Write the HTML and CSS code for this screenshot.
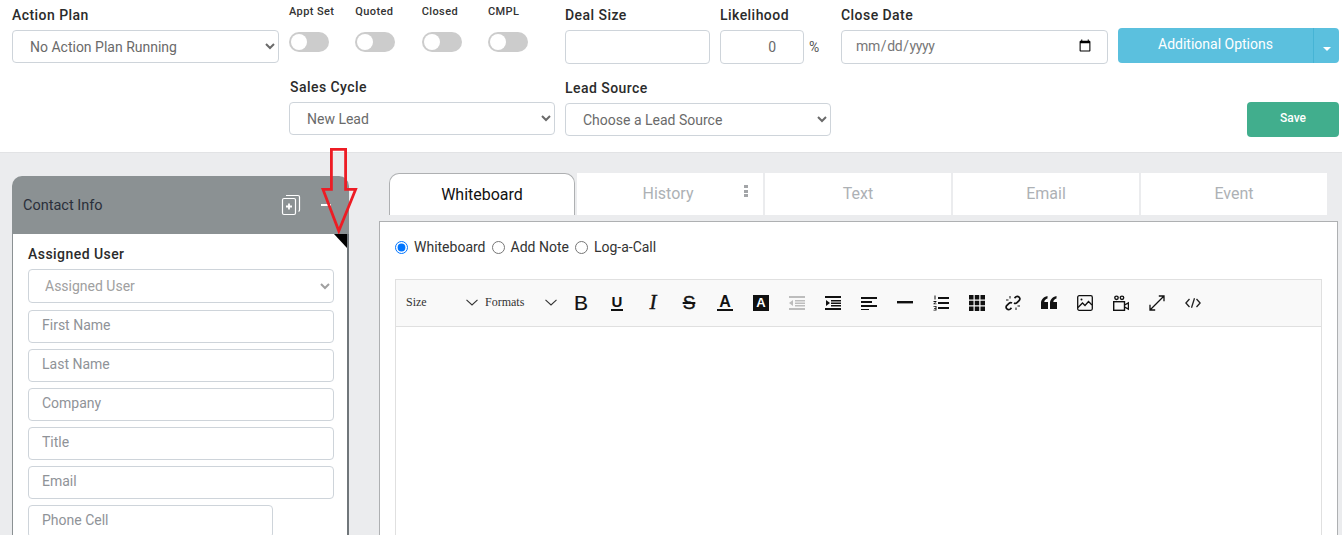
FILE: index.html
```html
<!DOCTYPE html>
<html lang="en">
<head>
<meta charset="utf-8">
<title>Contact</title>
<link rel="stylesheet" href="styles.css">
</head>
<body>
<header class="top-bar">
  <div class="field">
    <label class="field-label">Action Plan</label>
    <select class="control select-plan"><option>No Action Plan Running</option></select>
  </div>
  <div class="toggles">
    <div class="toggle-item"><span class="toggle-label">Appt Set</span><span class="toggle"></span></div>
    <div class="toggle-item"><span class="toggle-label">Quoted</span><span class="toggle"></span></div>
    <div class="toggle-item"><span class="toggle-label">Closed</span><span class="toggle"></span></div>
    <div class="toggle-item"><span class="toggle-label">CMPL</span><span class="toggle"></span></div>
  </div>
  <div class="deal-group">
    <div class="field deal-size">
      <label class="field-label">Deal Size</label>
      <input class="control input-tall" type="text">
    </div>
    <div class="field likelihood">
      <label class="field-label">Likelihood</label>
      <div class="likelihood-row">
        <input class="control input-tall input-right" type="text" value="0">
        <span class="percent">%</span>
      </div>
    </div>
  </div>
  <div class="field">
    <label class="field-label">Close Date</label>
    <input class="control input-tall input-date" type="date">
  </div>
  <div class="split-button">
    <button class="btn-options" type="button">Additional Options</button>
    <button class="btn-caret" type="button"><span class="caret"></span></button>
  </div>
  <div class="spacer"></div>
  <div class="field sales-cycle">
    <label class="field-label">Sales Cycle</label>
    <select class="control"><option>New Lead</option></select>
  </div>
  <div class="field lead-source">
    <label class="field-label">Lead Source</label>
    <select class="control"><option>Choose a Lead Source</option></select>
  </div>
  <div class="spacer"></div>
  <div class="save-cell"><button class="btn-save" type="button">Save</button></div>
</header>

<main class="workspace">
  <section class="contact-panel">
    <div class="panel-head">
      <span class="panel-title">Contact Info</span>
      <svg class="panel-copy" width="20" height="22" viewBox="0 0 20 22" fill="none" stroke="#fff" stroke-width="1.2" aria-hidden="true">
        <rect x="1.5" y="4.5" width="13" height="16" rx="1.5"/>
        <path d="M5 1.5h12a1.5 1.5 0 0 1 1.5 1.5v13a1.500 1.500 0 0 1-1 1.400"/>
        <path d="M8 9.500v6M5 12.500h6" stroke-width="1.800"/>
      </svg>
      <span class="panel-minus"></span>
    </div>
    <div class="panel-body">
      <span class="corner"></span>
      <label class="assigned-label">Assigned User</label>
      <select class="control muted"><option>Assigned User</option></select>
      <input class="control" type="text" placeholder="First Name">
      <input class="control" type="text" placeholder="Last Name">
      <input class="control" type="text" placeholder="Company">
      <input class="control" type="text" placeholder="Title">
      <input class="control" type="text" placeholder="Email">
      <input class="control phone" type="text" placeholder="Phone Cell">
    </div>
  </section>

  <section class="detail">
    <nav class="tabs">
      <a class="tab tab-active">Whiteboard</a>
      <a class="tab tab-history">History<span class="kebab"><i></i><i></i><i></i></span></a>
      <a class="tab">Text</a>
      <a class="tab">Email</a>
      <a class="tab">Event</a>
    </nav>
    <div class="detail-box">
      <div class="radios">
        <label class="radio"><input type="radio" name="mode" checked>Whiteboard</label>
        <label class="radio"><input type="radio" name="mode">Add Note</label>
        <label class="radio"><input type="radio" name="mode">Log-a-Call</label>
      </div>
      <div class="editor">
        <div class="toolbar">
          <div class="tb-select tb-size">Size<svg width="12" height="7" viewBox="0 0 12 7" fill="none" stroke="#333" stroke-width="1.100"><path d="M.5.800 6 6l5.500-5.200"/></svg></div>
          <div class="tb-select tb-formats">Formats<svg width="12" height="7" viewBox="0 0 12 7" fill="none" stroke="#333" stroke-width="1.100"><path d="M.5.800 6 6l5.500-5.200"/></svg></div>
          <span class="tb-btn"><span class="g-b">B</span></span>
          <span class="tb-btn"><span class="g-u">U</span></span>
          <span class="tb-btn"><span class="g-i">I</span></span>
          <span class="tb-btn"><span class="g-s">S</span></span>
          <span class="tb-btn"><span class="g-a">A</span></span>
          <span class="tb-btn"><span class="g-ab">A</span></span>
          <span class="tb-btn"><svg width="16" height="14" viewBox="0 0 16 14" fill="#bdbdbd"><path d="M0 0h16v2H0zM6 4h10v1.500H6zM6 6.500h10V8H6zM6 9h10v1.500H6zM0 12h16v2H0zM4 4v6L0 7z"/></svg></span>
          <span class="tb-btn"><svg width="16" height="14" viewBox="0 0 16 14" fill="#111"><path d="M0 0h16v2H0zM6 4h10v1.500H6zM6 6.500h10V8H6zM6 9h10v1.500H6zM0 12h16v2H0zM1 4v6l4-3z"/></svg></span>
          <span class="tb-btn"><svg width="16" height="14" viewBox="0 0 16 14" fill="#111"><path d="M0 1h16v2H0zM0 5h11v2H0zM0 9h16v2H0zM0 13h8v1.500H0z"/></svg></span>
          <span class="tb-btn"><svg width="16" height="3" viewBox="0 0 16 3" fill="#111"><path d="M0 0h16v2.400H0z"/></svg></span>
          <span class="tb-btn"><svg width="16" height="16" viewBox="0 0 16 16" fill="#111"><path d="M5 2h11v2H5zM5 7h11v2H5zM5 12h11v2H5zM1.500.5h1v4h-1zM.5 6h3v.8L1.500 8.500h2v.800h-3v-.800L2.500 7h-2zM.5 11h3v4.500h-3v-.800h2v-1h-1.500v-.700h1.500v-1.200h-2z"/></svg></span>
          <span class="tb-btn"><svg width="16" height="16" viewBox="0 0 16 16" fill="#111"><path d="M0 0h4.500v4.500H0zM5.750 0h4.500v4.500h-4.500zM11.500 0H16v4.500h-4.500zM0 5.750h4.500v4.500H0zM5.750 5.750h4.500v4.500h-4.500zM11.500 5.750H16v4.500h-4.500zM0 11.500h4.500V16H0zM5.750 11.500h4.500V16h-4.500zM11.500 11.500H16V16h-4.500z"/></svg></span>
          <span class="tb-btn"><svg width="16" height="16" viewBox="0 0 16 16" fill="none" stroke="#111" stroke-width="1.700"><path d="M9.500 3.200 10.800 1.900a2.500 2.500 0 0 1 3.500 3.500L12 7.700a2.500 2.500 0 0 1-3 .4"/><path d="M6.500 12.800 5.200 14.100a2.500 2.500 0 0 1-3.500-3.500L4 8.300a2.500 2.500 0 0 1 3-.4"/><path d="M5 1v2.500M1 5h2.500M11 15v-2.500M15 11h-2.500" stroke-width="1"/></svg></span>
          <span class="tb-btn"><svg width="16" height="13" viewBox="0 0 16 13" fill="#111"><path d="M7 13H0V7.500C0 3.500 2.300 1 6.500 0v2.600C4.400 3.300 3.400 4.500 3.300 6H7zM16 13H9V7.500C9 3.500 11.300 1 15.500 0v2.600c-2.100.7-3.100 1.900-3.200 3.400H16z"/></svg></span>
          <span class="tb-btn"><svg width="16" height="16" viewBox="0 0 16 16" fill="none" stroke="#111" stroke-width="1.300"><rect x=".7" y=".7" width="14.600" height="14.600" rx="1.500"/><path d="M1 12.500 5.500 8 8 10.500 11.500 6.500 15 10"/><circle cx="4.500" cy="4.500" r="1" fill="#111" stroke="none"/></svg></span>
          <span class="tb-btn"><svg width="16" height="16" viewBox="0 0 16 16" fill="none" stroke="#111" stroke-width="1.400"><circle cx="3.500" cy="2.800" r="1.700"/><circle cx="9" cy="2.800" r="1.700"/><rect x=".7" y="6.700" width="10.800" height="8.600"/><path d="M11.500 10 15.500 7.800v6.400L11.500 12"/></svg></span>
          <span class="tb-btn"><svg width="16" height="16" viewBox="0 0 16 16" fill="none" stroke="#111" stroke-width="1.300"><path d="M1 15 15 1M9.800 1H15v5.200M1 9.800V15h5.200"/></svg></span>
          <span class="tb-btn"><svg width="16" height="10" viewBox="0 0 16 10" fill="none" stroke="#222" stroke-width="1.300"><path d="M4.500 1 .9 5l3.600 4M11.500 1l3.600 4-3.600 4M9.500.3 6.500 9.700"/></svg></span>
        </div>
        <div class="editor-area"></div>
      </div>
    </div>
  </section>
</main>

<svg class="red-arrow" width="37" height="86" viewBox="0 0 37 86" fill="none" stroke="#ed1c24" stroke-width="2.800" aria-hidden="true">
  <path d="M10.400 1.400h14.200v40h10L17.800 83 2 41.400h8.400z"/>
</svg>
</body>
</html>
```

FILE: styles.css
```css
* { box-sizing: border-box; }

html, body {
  margin: 0;
  height: 535px;
  overflow: hidden;
}

body {
  background: #ebecee;
  font-family: Roboto, "Liberation Sans", Arial, sans-serif;
  color: #222;
  position: relative;
}

.top-bar {
  height: 153px;
  background: #fff;
  border-bottom: 1px solid #e2e3e5;
  padding: 5px 3px 0 12px;
  display: grid;
  grid-template-columns: 267px 266px 266px 267px 221px;
  grid-template-rows: 59px 75px;
  column-gap: 10px;
  row-gap: 13px;
}

.field { display: flex; flex-direction: column; }

.field-label {
  font-size: 14px;
  font-weight: 500;
  line-height: 20px;
  height: 20px;
  margin-bottom: 5px;
  letter-spacing: .45px;
  color: #2b2b2b;
}

.control {
  display: block;
  width: 100%;
  height: 33px;
  border: 1px solid #ced4da;
  border-radius: 4px;
  background: #fff;
  font-family: inherit;
  font-size: 14px;
  color: #6a6a6a;
  padding: 0 13px;
  outline: none;
}

select.control { padding-left: 13px; }
.input-tall { height: 34px; }
.input-right { text-align: right; padding-right: 27px; }
.input-date { color: #777; letter-spacing: -.4px; padding-bottom: 2px; }
.control::placeholder { color: #8f9398; opacity: 1; }
.muted { color: #a0a0a0; }

.toggles {
  display: grid;
  grid-template-columns: repeat(4, 66.330px);
}

.toggle-item { display: flex; flex-direction: column; }

.toggle-label {
  font-size: 11px;
  font-weight: 500;
  line-height: 13px;
  white-space: nowrap;
  letter-spacing: .4px;
  color: #333;
}

.toggle {
  position: relative;
  display: block;
  width: 40px;
  height: 20px;
  margin-top: 14px;
  border-radius: 10px;
  background: #ccc;
}

.toggle::before {
  content: "";
  position: absolute;
  left: 2px;
  top: 2px;
  width: 16px;
  height: 16px;
  border-radius: 50%;
  background: #fff;
}

.deal-group { display: flex; gap: 10px; }
.deal-size { width: 145px; }
.likelihood { width: 111px; }
.likelihood-row { display: flex; align-items: center; }
.likelihood-row .control { width: 84px; flex: none; }
.percent { margin-left: 5px; font-size: 14px; color: #555; }

.split-button { display: flex; height: 35px; margin-top: 23px; }

.btn-options, .btn-caret {
  border: 0;
  background: #5bc0de;
  color: #fff;
  font-family: inherit;
  font-size: 14px;
  padding: 0;
}

.btn-options {
  width: 195px;
  border-radius: 4px 0 0 4px;
  padding-bottom: 4px;
}

.btn-caret {
  width: 26px;
  border-left: 1px solid #46b4d5;
  border-radius: 0 4px 4px 0;
}

.caret {
  display: inline-block;
  border: 4px solid transparent;
  border-top-color: #fff;
  border-bottom-width: 0;
}

.spacer { min-width: 0; }
.sales-cycle .field-label { padding-left: 1px; }
.lead-source { padding-top: 1px; }
.save-cell { display: flex; justify-content: flex-end; padding-top: 25px; }

.btn-save {
  width: 92px;
  height: 35px;
  border: 0;
  border-radius: 4px;
  background: #41ae8d;
  color: #fff;
  font-family: inherit;
  font-size: 12px;
  font-weight: 500;
  padding: 0 0 4px;
}

.workspace {
  display: flex;
  align-items: flex-start;
  padding: 20px 4px 0 12px;
  gap: 30px;
}

.contact-panel {
  flex: none;
  width: 337px;
  margin-top: 3px;
}

.panel-head {
  height: 58px;
  background: #8b9193;
  border-radius: 10px 10px 0 0;
  display: flex;
  align-items: center;
  padding: 0 0 0 11px;
  color: #2a2f3a;
  font-size: 14.500px;
}

.panel-title { flex: 1; }
.panel-copy { margin-right: 20px; }
.panel-minus { width: 10px; height: 2px; background: #fff; margin-right: 18px; }

.panel-body {
  position: relative;
  background: #fff;
  border-left: 1px solid #8b9193;
  border-right: 2px solid #70767a;
  padding: 10px 13px 40px 15px;
  display: flex;
  flex-direction: column;
  gap: 6px;
}

.corner {
  position: absolute;
  right: 0;
  top: 0;
  width: 0;
  height: 0;
  border-style: solid;
  border-width: 0 13px 14px 0;
  border-color: transparent #000 transparent transparent;
}

.assigned-label {
  font-size: 14px;
  font-weight: 500;
  line-height: 20px;
  letter-spacing: .45px;
  margin-bottom: -1px;
  color: #2b2b2b;
}

.panel-body .muted { margin-bottom: 1px; padding-left: 12px; height: 34px; }
.panel-body input { padding-bottom: 3px; }
.phone { width: 245px; }

.detail { flex: 1; min-width: 0; }

.tabs {
  display: flex;
  gap: 2px;
  padding-left: 10px;
  margin-bottom: 6px;
  height: 42px;
}

.tab {
  position: relative;
  width: 186px;
  background: #fff;
  display: flex;
  align-items: center;
  justify-content: center;
  padding-bottom: 2px;
  font-size: 16px;
  color: #adb1b5;
}

.tab-history { padding-right: 4px; }

.tab-active {
  color: #111;
  border: 1px solid #aeb0b2;
  border-bottom: 0;
  border-radius: 10px 10px 0 0;
  padding-bottom: 0;
}

.kebab {
  position: absolute;
  right: 15px;
  top: 12px;
  display: flex;
  flex-direction: column;
  gap: 1.500px;
}

.kebab i { width: 4px; height: 3px; background: #a3a5a8; display: block; }

.detail-box {
  height: 400px;
  background: #fff;
  border: 1px solid #aeb0b2;
  border-bottom: 0;
  padding: 15px 15px 0;
}

.radios {
  display: flex;
  gap: 6px;
  height: 20px;
  margin-bottom: 22px;
  font-size: 14px;
  color: #333;
}

.radio { display: flex; align-items: center; }
.radio input { margin: 0 6px 0 0; width: 13px; height: 13px; }

.editor {
  height: 320px;
  border: 1px solid #e0e0e0;
  border-bottom: 0;
}

.toolbar {
  height: 47px;
  background: #f9f9f9;
  border-bottom: 1px solid #e0e0e0;
  display: flex;
  align-items: center;
  padding: 0 0 1px 10px;
}

.tb-select {
  display: flex;
  align-items: center;
  justify-content: space-between;
  font-family: "Liberation Serif", serif;
  font-size: 12px;
  color: #333;
}

.tb-size { width: 79px; padding-right: 7px; }
.tb-formats { width: 78px; padding-right: 6px; }

.tb-btn {
  flex: none;
  width: 36px;
  height: 36px;
  display: flex;
  align-items: center;
  justify-content: center;
  color: #111;
}

.g-b { font: 400 21px/1 "Liberation Sans", sans-serif; -webkit-text-stroke: .2px #111; }
.g-u { font: 700 15px/14px "Liberation Sans", sans-serif; border-bottom: 2px solid #111; padding: 0 1px; }
.g-i { font: italic 400 21px/1 "Liberation Serif", serif; -webkit-text-stroke: .4px #111; }
.g-s { font: 400 19px/1 "Liberation Sans", sans-serif; -webkit-text-stroke: .4px #111; text-decoration: line-through; text-decoration-thickness: 1.500px; padding: 0 2px; }
.g-a { font: 700 16px/14px "Liberation Sans", sans-serif; border-bottom: 2px solid #111; padding: 0 1px; width: 16px; text-align: center; }
.g-ab { font: 700 13px/16px "Liberation Sans", sans-serif; background: #111; color: #fff; padding: 0 3px; width: 16px; height: 16px; text-align: center; }

.editor-area { height: 200px; background: #fff; }

.red-arrow {
  position: absolute;
  left: 321px;
  top: 148px;
}
```
